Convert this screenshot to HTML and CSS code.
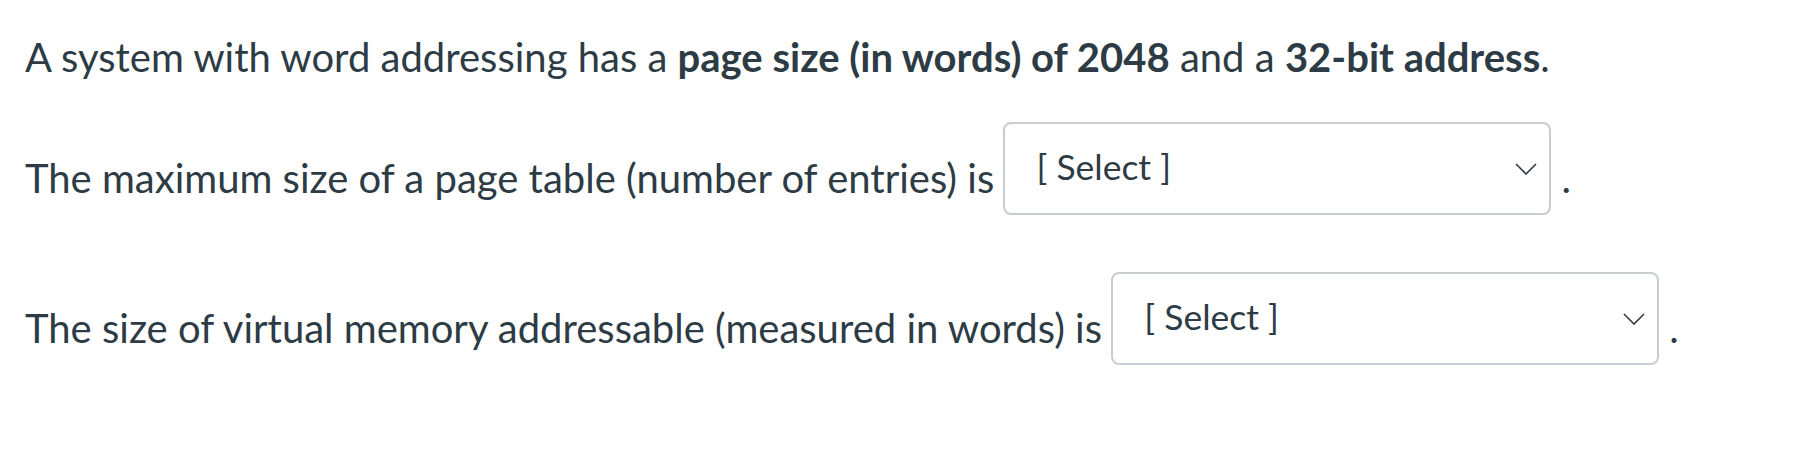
FILE: index.html
```html
<!DOCTYPE html>
<html>
<head>
<meta charset="utf-8">
<link rel="stylesheet" href="styles.css">
</head>
<body>
<div class="question">
  <p class="intro">A system with word addressing has a <strong>page size (in words) of 2048</strong> and a <strong>32-bit address</strong>.</p>
  <p class="row row-first">The maximum size of a page table (number of entries) is <span class="select"><span class="select-label">[ Select ]</span><svg class="chev" width="22" height="12" viewBox="0 0 22 12"><path d="M1 1 L11 11 L21 1" fill="none" stroke="#2d3b45" stroke-width="1.6"/></svg></span><span class="dot">.</span></p>
  <p class="row row-second">The size of virtual memory addressable (measured in words) is <span class="select"><span class="select-label">[ Select ]</span><svg class="chev" width="22" height="12" viewBox="0 0 22 12"><path d="M1 1 L11 11 L21 1" fill="none" stroke="#2d3b45" stroke-width="1.6"/></svg></span><span class="dot">.</span></p>
</div>
</body>
</html>
```
FILE: styles.css
```css
html, body {
  margin: 0;
  padding: 0;
  background: #ffffff;
}
.question {
  padding: 27px 0 0 25px;
  font-family: Lato, "Liberation Sans", sans-serif;
  font-size: 40px;
  line-height: 1.5;
  color: #2d3b45;
}
.question p {
  margin: 0;
}
.question strong {
  font-weight: 700;
}
.row-first {
  margin-top: 35px !important;
}
.row-second {
  margin-top: 57px !important;
}
.select {
  display: inline-flex;
  align-items: center;
  justify-content: space-between;
  box-sizing: border-box;
  width: 548px;
  height: 93px;
  padding: 0 12px 0 31px;
  border: 2px solid #c7cdd1;
  border-radius: 8px;
  background: #fff;
  vertical-align: 13px;
  font-size: 35.5px;
  line-height: 1;
  margin-left: -1px;
}
.select-label {
  margin-top: -4px;
}
.chev {
  display: block;
}
.dot {
  margin-left: 10px;
}
```
